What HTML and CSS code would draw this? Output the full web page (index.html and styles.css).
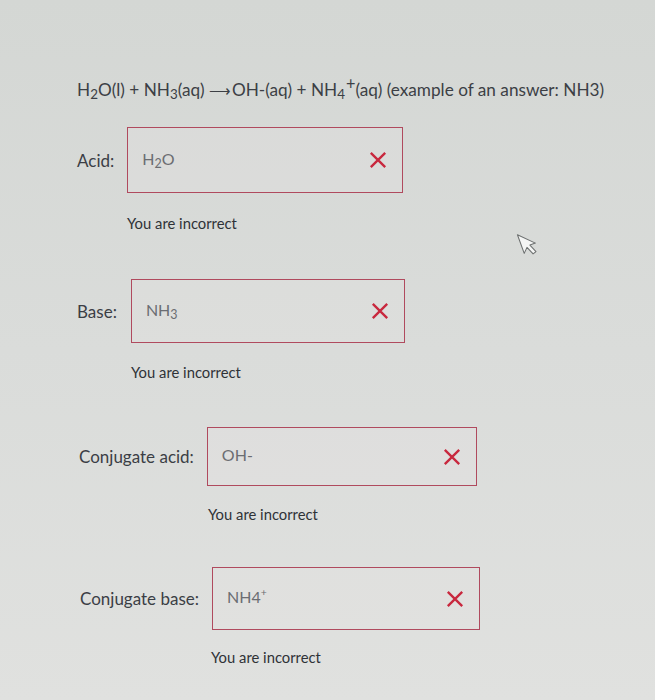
FILE: index.html
```html
<!DOCTYPE html>
<html lang="en">
<head>
<meta charset="utf-8">
<title>Acid base question</title>
<link rel="stylesheet" href="styles.css">
</head>
<body>
<main class="page">
  <p class="equation">H<sub>2</sub>O(l) + NH<sub>3</sub>(aq) <span class="arrow">⟶</span>OH-(aq) + NH<sub>4</sub><sup>+</sup>(aq) (example of an answer: NH3)</p>

  <section class="q q-acid">
    <div class="row">
      <span class="label">Acid:</span>
      <div class="box">
        <span class="answer">H<sub>2</sub>O</span>
        <svg class="x" viewBox="0 0 20 20"><path d="M2 2 L18 18 M18 2 L2 18"/></svg>
      </div>
    </div>
    <p class="feedback">You are incorrect</p>
  </section>

  <section class="q q-base">
    <div class="row">
      <span class="label">Base:</span>
      <div class="box">
        <span class="answer">NH<sub>3</sub></span>
        <svg class="x" viewBox="0 0 20 20"><path d="M2 2 L18 18 M18 2 L2 18"/></svg>
      </div>
    </div>
    <p class="feedback">You are incorrect</p>
  </section>

  <section class="q q-cacid">
    <div class="row">
      <span class="label">Conjugate acid:</span>
      <div class="box">
        <span class="answer">OH-</span>
        <svg class="x" viewBox="0 0 20 20"><path d="M2 2 L18 18 M18 2 L2 18"/></svg>
      </div>
    </div>
    <p class="feedback">You are incorrect</p>
  </section>

  <section class="q q-cbase">
    <div class="row">
      <span class="label">Conjugate base:</span>
      <div class="box">
        <span class="answer">NH4<sup class="small">+</sup></span>
        <svg class="x" viewBox="0 0 20 20"><path d="M2 2 L18 18 M18 2 L2 18"/></svg>
      </div>
    </div>
    <p class="feedback">You are incorrect</p>
  </section>

  <svg class="cursor" viewBox="0 0 16 24"><path d="M1 1 L1 18 L5 14 L8 21 L11 20 L8 13 L13 13 Z"/></svg>
</main>
</body>
</html>
```

FILE: styles.css
```css
html, body {
  margin: 0;
  height: 100%;
}
body {
  background: linear-gradient(180deg, #d4d7d4 0%, #dadcda 50%, #e0e1df 100%);
  font-family: Lato, "Noto Sans", sans-serif;
  color: #3a3d43;
}
.page {
  position: relative;
  padding: 78px 0 0 77px;
  height: 622px;
}
.equation {
  margin: 0;
  font-size: 17.2px;
  line-height: 24px;
  color: #3c3f45;
  white-space: nowrap;
}
.equation sub, .answer sub {
  font-size: 0.78em;
  vertical-align: -0.25em;
  line-height: 0;
}
.equation sup {
  font-size: 0.95em;
  vertical-align: 0.35em;
  line-height: 0;
  margin-left: 1px;
}
.arrow {
  font-size: 0.9em;
  margin-right: 1px;
}
.q {
  display: grid;
  grid-template-columns: auto;
}
.row {
  display: flex;
  align-items: center;
  gap: 13px;
}
.label {
  font-size: 17px;
  color: #3b3e45;
}
.box {
  display: flex;
  align-items: center;
  justify-content: space-between;
  box-sizing: border-box;
  width: 274px;
  height: 64px;
  border: 1.5px solid #b04a5e;
  padding: 0 15px 0 14px;
  background: rgba(235, 228, 230, 0.2);
}
.answer {
  font-size: 16px;
  color: #6b6d72;
  margin-top: -4px;
}
.answer sup.small {
  font-size: 0.65em;
  vertical-align: 0.7em;
  line-height: 0;
}
.x {
  width: 18px;
  height: 18px;
  stroke: #c8283e;
  stroke-width: 2.6;
  fill: none;
}
.feedback {
  margin: 19px 0 0;
  font-size: 14.8px;
  line-height: 20px;
  color: #2f3237;
}
.q-acid { margin-top: 25px; }
.q-acid .box { height: 66px; width: 276px; }
.q-acid .feedback { margin-left: 50px; margin-top: 20px; }
.q-base { margin-top: 46px; }
.q-base .feedback { margin-left: 54px; }
.q-base .box { margin-left: 1px; }
.q-cacid { margin-top: 45px; padding-left: 2px; }
.q-cacid .box { height: 59px; width: 270px; }
.q-cacid .feedback { margin-left: 129px; margin-top: 18px; }
.q-cbase { margin-top: 43px; padding-left: 3px; }
.q-cbase .box { height: 63px; width: 268px; }
.q-cbase .feedback { margin-left: 131px; margin-top: 17px; }
.cursor {
  position: absolute;
  left: 520px;
  top: 230px;
  width: 19px;
  height: 28px;
  transform: rotate(-20deg);
  fill: #f4f5f4;
  stroke: #6d7070;
  stroke-width: 0.9;
  stroke-linejoin: round;
}
```
